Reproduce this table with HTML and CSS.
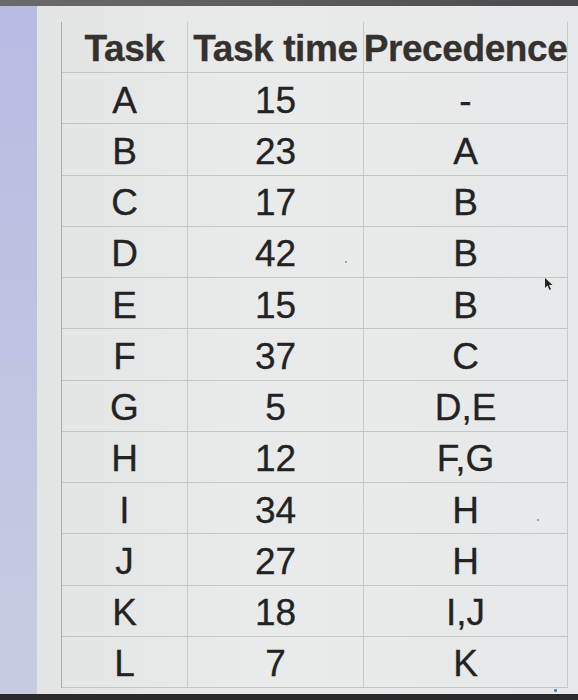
FILE: index.html
```html
<!DOCTYPE html>
<html>
<head>
<meta charset="utf-8">
<link rel="stylesheet" href="styles.css">
</head>
<body>
<div class="topbar"></div>
<div class="frame">
  <div class="strip"></div>
  <div class="screen">
    <div class="grid">
      <div class="cell head">Task</div>
      <div class="cell head">Task time</div>
      <div class="cell head last">Precedence</div>

      <div class="cell">A</div><div class="cell">15</div><div class="cell last">-</div>
      <div class="cell">B</div><div class="cell">23</div><div class="cell last">A</div>
      <div class="cell">C</div><div class="cell">17</div><div class="cell last">B</div>
      <div class="cell">D</div><div class="cell">42</div><div class="cell last">B</div>
      <div class="cell">E</div><div class="cell">15</div><div class="cell last">B</div>
      <div class="cell">F</div><div class="cell">37</div><div class="cell last">C</div>
      <div class="cell">G</div><div class="cell">5</div><div class="cell last">D,E</div>
      <div class="cell">H</div><div class="cell">12</div><div class="cell last">F,G</div>
      <div class="cell">I</div><div class="cell">34</div><div class="cell last">H</div>
      <div class="cell">J</div><div class="cell">27</div><div class="cell last">H</div>
      <div class="cell">K</div><div class="cell">18</div><div class="cell last">I,J</div>
      <div class="cell">L</div><div class="cell">7</div><div class="cell last">K</div>
    </div>
    <svg class="cursor" width="12" height="14" viewBox="0 0 12 14">
      <path d="M2 1 L2 11 L4.5 8.5 L6.5 13 L8 12.3 L6 8 L9.5 8 Z" fill="#222"/>
    </svg>
    <span class="dot d1"></span>
    <span class="dot d2"></span>
    <span class="dot d3"></span>
  </div>
</div>
<div class="bottombar"></div>
</body>
</html>
```

FILE: styles.css
```css
html, body {
  margin: 0;
  padding: 0;
}
body {
  width: 578px;
  height: 700px;
  overflow: hidden;
  background: #e6e7e8;
  font-family: "Liberation Sans", Arial, sans-serif;
  display: flex;
  flex-direction: column;
}
.topbar {
  height: 6px;
  background: linear-gradient(to right, #6a6a6c, #58585a 60%, #4a4a4c);
  flex: none;
}
.frame {
  flex: 1;
  display: flex;
}
.strip {
  width: 37px;
  background: linear-gradient(to bottom, #b8bbe2, #bfc4e2 50%, #c6cce2);
  flex: none;
}
.screen {
  position: relative;
  flex: 1;
  background: linear-gradient(to right, #e3e5e5, #e9eaea 40%, #e7e8e9);
  padding: 16px 0 0 24px;
}
.grid {
  display: grid;
  grid-template-columns: 126px 176px 204px;
  grid-template-rows: 51px repeat(12, 51.25px);
  border-left: 1px solid #a9a9ab;
  width: 506px;
}
.cell {
  box-sizing: border-box;
  border-bottom: 1px solid #c4c5c6;
  border-right: 1px solid #c8c9ca;
  display: flex;
  justify-content: center;
  align-items: center;
  padding-top: 5px;
  font-size: 37px;
  color: #232324;
  -webkit-text-stroke: 0.3px #232324;
  white-space: nowrap;
}
.head {
  font-weight: bold;
  font-size: 37px;
  color: #34312e;
  -webkit-text-stroke: 0.3px #34312e;
  padding-top: 4px;
  letter-spacing: -0.4px;
}
.cursor {
  position: absolute;
  left: 506px;
  top: 271px;
}
.dot {
  position: absolute;
  width: 2px;
  height: 2px;
  border-radius: 1px;
  background: #888;
}
.d1 { left: 308px; top: 255px; }
.d2 { left: 500px; top: 513px; }
.d3 { left: 517px; top: 683px; width: 3px; height: 3px; background: #5a7fb0; }
.bottombar {
  height: 6px;
  background: #2a2a2c;
  flex: none;
}
```
